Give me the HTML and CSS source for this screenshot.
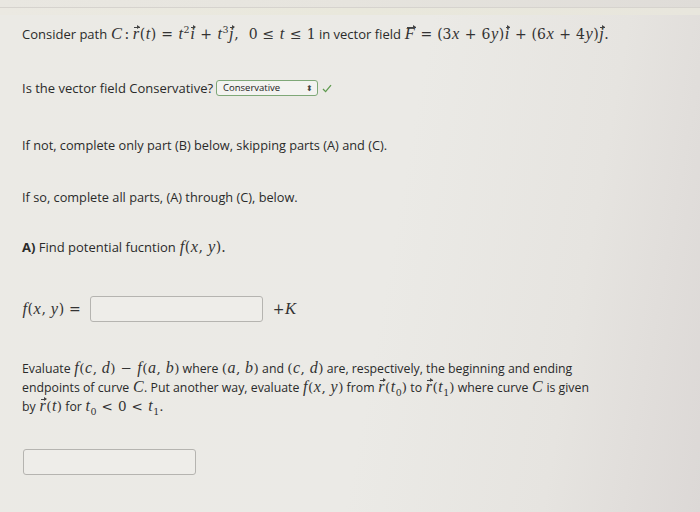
FILE: index.html
```html
<!DOCTYPE html>
<html>
<head>
<meta charset="utf-8">
<link rel="stylesheet" href="styles.css">
</head>
<body>
<div class="topbar"></div>
<div class="band"></div>
<main class="page">
  <p class="line l1">Consider path <span class="mt"><i>C</i><span class="colon">:</span><i class="v">r</i>(<i>t</i>)<span class="op">=</span><i>t</i><sup>2</sup><i class="v">i</i><span class="op">+</span><i>t</i><sup>3</sup><i class="v">j</i>,<span class="sp"></span>0<span class="op">≤</span><i>t</i><span class="op">≤</span>1</span> in vector field <span class="mt"><i class="v">F</i><span class="op">=</span>(3<i>x</i><span class="op">+</span>6<i>y</i>)<i class="v">i</i><span class="op">+</span>(6<i>x</i><span class="op">+</span>4<i>y</i>)<i class="v">j</i>.</span></p>

  <div class="line l2">Is the vector field Conservative?<span class="select"><span>Conservative</span><span class="arrows">⬍</span></span><svg class="check" width="10" height="9" viewBox="0 0 10 9"><path d="M1 5 L3.6 7.6 L9 1.2" fill="none" stroke="#5e9a4e" stroke-width="1.3"/></svg></div>

  <p class="line l3">If not, complete only part (B) below, skipping parts (A) and (C).</p>

  <p class="line l4">If so, complete all parts, (A) through (C), below.</p>

  <p class="line l5"><b>A)</b> Find potential fucntion <span class="mt"><i>f</i>(<i>x</i>, <i>y</i>).</span></p>

  <div class="frow"><span class="mt"><i>f</i>(<i>x</i>, <i>y</i>)<span class="op">=</span></span><span class="box"></span><span class="mt">+<i>K</i></span></div>

  <p class="para">Evaluate <span class="mt"><i>f</i>(<i>c</i>, <i>d</i>)<span class="op">−</span><i>f</i>(<i>a</i>, <i>b</i>)</span> where <span class="mt">(<i>a</i>, <i>b</i>)</span> and <span class="mt">(<i>c</i>, <i>d</i>)</span> are, respectively, the beginning and ending endpoints of curve <span class="mt"><i>C</i></span>. Put another way, evaluate <span class="mt"><i>f</i>(<i>x</i>, <i>y</i>)</span> from <span class="mt"><i class="v">r</i>(<i>t</i><sub>0</sub>)</span> to <span class="mt"><i class="v">r</i>(<i>t</i><sub>1</sub>)</span> where curve <span class="mt"><i>C</i></span> is given by <span class="mt"><i class="v">r</i>(<i>t</i>)</span> for <span class="mt"><i>t</i><sub>0</sub><span class="op">&lt;</span>0<span class="op">&lt;</span><i>t</i><sub>1</sub>.</span></p>

  <div class="box box2"></div>
</main>
</body>
</html>
```

FILE: styles.css
```css
html, body {
  margin: 0;
  padding: 0;
}
body {
  width: 700px;
  height: 512px;
  overflow: hidden;
  background: linear-gradient(100deg, #ebeae5 0%, #ebeae6 55%, #e6e4e0 80%, #dcd8d6 100%);
  font-family: "Open Sans", "Liberation Sans", sans-serif;
  font-size: 13px;
  color: #2a2a2a;
}
.topbar {
  height: 7px;
  background: linear-gradient(90deg, #e9e7e1 0%, #e6e4de 50%, #dfdcd8 100%);
  border-bottom: 1px solid #d6d3ce;
}
.band {
  height: 7px;
  background: linear-gradient(90deg, #ebe9e2 0%, #e9e8dc 50%, #e8e6dd 100%);
}
.page {
  padding: 0 0 0 22px;
}
.line {
  margin: 0;
  white-space: nowrap;
  line-height: 18px;
}
.l1 { margin-top: 10px; }
.l2 { margin-top: 36px; display: flex; align-items: center; }
.l3 { margin-top: 39px; font-size: 12.75px; }
.l4 { margin-top: 34px; font-size: 12.75px; }
.l5 { margin-top: 32px; }
b { font-weight: 700; }
.mt {
  font-family: "DejaVu Serif", "Liberation Serif", serif;
  font-size: 14px;
  color: #333;
}
.mt i {
  font-family: "Liberation Serif", serif;
  font-style: italic;
  font-size: 16.5px;
  padding: 0 0.5px;
}
.mt sup, .mt sub {
  font-size: 9.5px;
  line-height: 0;
}
.op {
  margin: 0 5px;
}
.colon { margin: 0 3px 0 2px; }
.sp { display: inline-block; width: 10px; }
.v {
  position: relative;
  display: inline-block;
  padding-right: 1px;
}
.v::before {
  content: "";
  position: absolute;
  left: 28%;
  right: -4%;
  top: 2px;
  height: 1px;
  background: #444;
}
.v::after {
  content: "";
  position: absolute;
  right: -8%;
  top: 0px;
  border-left: 3px solid #444;
  border-top: 2.5px solid transparent;
  border-bottom: 2.5px solid transparent;
}
.select {
  display: inline-flex;
  align-items: center;
  justify-content: space-between;
  box-sizing: border-box;
  width: 102px;
  height: 16px;
  margin-left: 3px;
  padding: 0 4px 0 6px;
  border: 1px solid #7fa878;
  border-radius: 3px;
  background: #f3f3f0;
  font-size: 9.5px;
  color: #222;
}
.arrows { font-size: 8px; color: #444; }
.check { margin-left: 4px; }
.frow {
  margin-top: 40px;
  display: flex;
  align-items: center;
  height: 26px;
}
.box {
  display: inline-block;
  width: 171px;
  height: 24px;
  margin: 0 10px 0 4px;
  border: 1px solid #b5b4b0;
  border-radius: 3px;
  background: #eeede9;
}
.para {
  margin: 37px 0 0 0;
  width: 575px;
  line-height: 18px;
  font-size: 12.3px;
}
.para .mt { font-size: 13.5px; }
.para .mt i { font-size: 16px; }
.box2 {
  margin: 33px 0 0 1px;
}
```
